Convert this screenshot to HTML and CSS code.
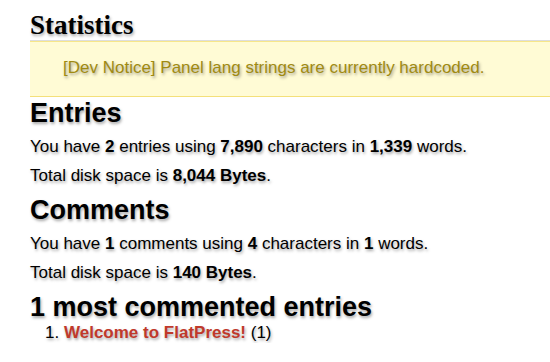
FILE: index.html
```html
<!DOCTYPE html>
<html lang="en">
<head>
	<meta charset="UTF-8">
	<title>Statistics</title>
	<link rel="stylesheet" href="styles.css">
</head>
<body>
	<div class="main">
		<h1 class="title">Statistics</h1>
		<div class="notice">
			<p>[Dev Notice] Panel lang strings are currently hardcoded.</p>
		</div>

		<h2>Entries</h2>
		<p>You have <strong>2</strong> entries using <strong>7,890</strong> characters in <strong>1,339</strong> words.</p>
		<p>Total disk space is <strong>8,044 Bytes</strong>.</p>

		<h2>Comments</h2>
		<p>You have <strong>1</strong> comments using <strong>4</strong> characters in <strong>1</strong> words.</p>
		<p>Total disk space is <strong>140 Bytes</strong>.</p>

		<h2>1 most commented entries</h2>
		<ol class="top_list">
			<li><a href="javascript:">Welcome to FlatPress!</a> (1)</li>
		</ol>
	</div>
</body>
</html>
```

FILE: styles.css
```css
/*reset*/
body{margin: 0; padding: 0; font-family: 'Liberation Sans', Arial, sans-serif; font-size: 17px; color: #000; background: #fff;}
h1,h2,p,ol{margin: 0; padding: 0;}
a{text-decoration: none;}

/*page*/
.main{padding: 10px 0 0 30px; text-shadow: 1px 2px 3px rgba(0,0,0,.35);}

.title{font-family: 'Liberation Serif', 'Times New Roman', serif; font-size: 27px; line-height: 30px; font-weight: bold; border-bottom: 1px solid #ddd;}

.notice{background: #fffbd5; border-top: 1px solid #f7e68a; border-bottom: 1px solid #f4e07a; padding: 16px 0 18px 33px;}
.notice p{color: #a08a12; margin: 0; line-height: 20px;}

h2{font-size: 27px; line-height: 30px; font-weight: bold; margin: 9px 0 0;}
.notice + h2{margin-top: 1px;}
p{line-height: 20px; margin: 9px 0;}
strong{font-weight: bold;}

.top_list{margin: 1px 0 0; padding-left: 34px; line-height: 20px;}
.top_list a{color: #c0392b; font-weight: bold;}
```
